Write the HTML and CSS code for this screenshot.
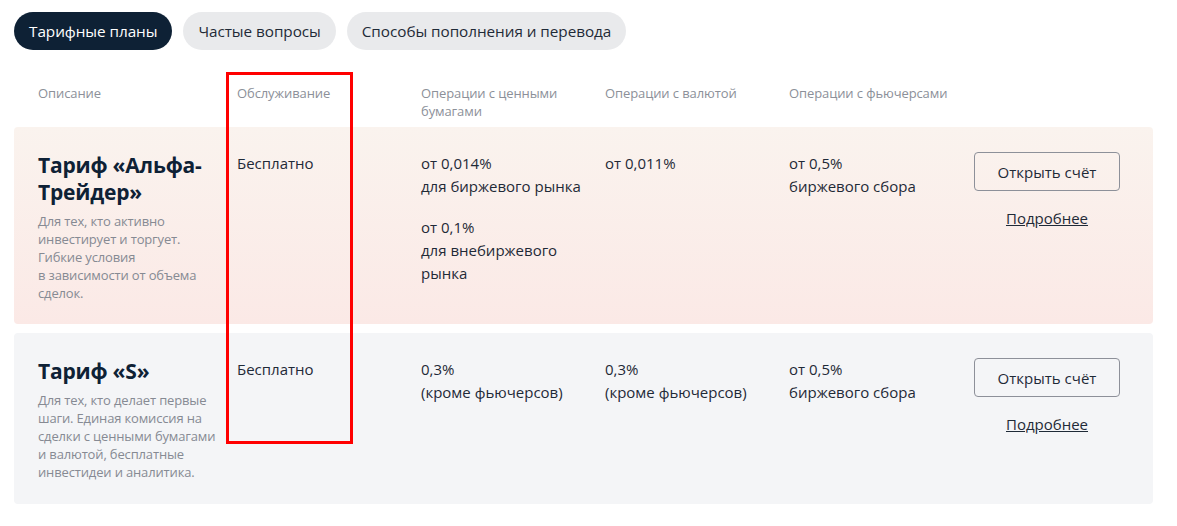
FILE: index.html
```html
<!DOCTYPE html>
<html lang="ru">
<head>
<meta charset="utf-8">
<title>Тарифы</title>
<link rel="stylesheet" href="styles.css">
</head>
<body>
<div class="page">
  <nav class="tabs">
    <span class="tab active">Тарифные планы</span>
    <span class="tab">Частые вопросы</span>
    <span class="tab">Способы пополнения и перевода</span>
  </nav>

  <div class="table">
    <div class="row head">
      <div class="cell">Описание</div>
      <div class="cell">Обслуживание</div>
      <div class="cell">Операции с ценными бумагами</div>
      <div class="cell">Операции с валютой</div>
      <div class="cell">Операции с фьючерсами</div>
      <div class="cell"></div>
    </div>

    <div class="row card card-alfa">
      <div class="cell desc">
        <h3 class="title">Тариф «Альфа-Трейдер»</h3>
        <p class="note">Для тех, кто активно инвестирует и&nbsp;торгует. Гибкие условия<br>в зависимости от объема сделок.</p>
      </div>
      <div class="cell val">Бесплатно</div>
      <div class="cell val">
        <p>от 0,014%<br>для биржевого рынка</p>
        <p class="gap">от 0,1%<br>для внебиржевого<br>рынка</p>
      </div>
      <div class="cell val">от 0,011%</div>
      <div class="cell val">от 0,5%<br>биржевого сбора</div>
      <div class="cell actions">
        <button class="btn" type="button">Открыть счёт</button>
        <a class="more" href="#">Подробнее</a>
      </div>
    </div>

    <div class="row card card-s">
      <div class="cell desc">
        <h3 class="title">Тариф «S»</h3>
        <p class="note">Для тех, кто делает первые шаги. Единая комиссия на сделки с ценными бумагами и валютой, бесплатные инвестидеи и аналитика.</p>
      </div>
      <div class="cell val">Бесплатно</div>
      <div class="cell val">0,3%<br>(кроме фьючерсов)</div>
      <div class="cell val">0,3%<br>(кроме фьючерсов)</div>
      <div class="cell val">от 0,5%<br>биржевого сбора</div>
      <div class="cell actions">
        <button class="btn" type="button">Открыть счёт</button>
        <a class="more" href="#">Подробнее</a>
      </div>
    </div>

    <div class="highlight"></div>
  </div>
</div>
</body>
</html>
```

FILE: styles.css
```css
* { box-sizing: border-box; }

html, body {
  margin: 0;
  padding: 0;
  background: #ffffff;
}

body {
  font-family: "Open Sans", "Noto Sans", "DejaVu Sans", sans-serif;
  color: #1f2a37;
  overflow: hidden;
}

.page {
  padding: 12px 14px 0 14px;
  width: 1167px;
}

.tabs {
  display: flex;
  gap: 11px;
}

.tab {
  display: inline-flex;
  align-items: center;
  height: 38px;
  padding: 0 15px;
  border-radius: 19px;
  background: #e9eaec;
  color: #1f2a37;
  font-size: 15.3px;
  letter-spacing: -0.05px;
}

.tab.active {
  background: #0e2135;
  color: #ffffff;
}

.table {
  position: relative;
  margin-top: 34px;
  width: 1139px;
}

.row {
  display: grid;
  grid-template-columns: 199px 184px 184px 184px 185px 146px;
  padding: 0 24px;
}

.head {
  font-size: 13px;
  line-height: 18px;
  color: #8c9099;
  height: 43px;
}

.head .cell {
  padding-right: 14px;
  letter-spacing: -0.1px;
}

.card {
  border-radius: 4px;
  padding-top: 25px;
  padding-bottom: 22px;
}

.card-alfa {
  background: linear-gradient(180deg, #faf3ee 0%, #fbe9e6 100%);
  margin-bottom: 9px;
}

.card-s {
  background: #f4f5f7;
  padding-bottom: 23px;
}

.desc {
  padding-right: 18px;
}

.title {
  margin: 0 0 6px 0;
  font-size: 21px;
  line-height: 27px;
  font-weight: 700;
  color: #0e2135;
  letter-spacing: -0.2px;
}

.note {
  margin: 0;
  font-size: 13px;
  line-height: 18px;
  color: #868a93;
  letter-spacing: -0.15px;
}

.val {
  font-size: 15px;
  line-height: 23px;
  color: #1f2a37;
  padding-right: 12px;
}

.val p { margin: 0; }
.val p.gap { margin-top: 18px; }

.actions {
  display: flex;
  flex-direction: column;
  align-items: center;
}

.btn {
  width: 146px;
  height: 39px;
  border: 1px solid #8d9099;
  border-radius: 4px;
  background: transparent;
  font-family: inherit;
  font-size: 15px;
  color: #1f2a37;
  cursor: pointer;
}

.more {
  margin-top: 17px;
  font-size: 15px;
  color: #1f2a37;
  text-decoration: underline;
}

.highlight {
  position: absolute;
  left: 212px;
  top: -12px;
  width: 127px;
  height: 372px;
  border: 3px solid #ff0000;
  pointer-events: none;
}
```
